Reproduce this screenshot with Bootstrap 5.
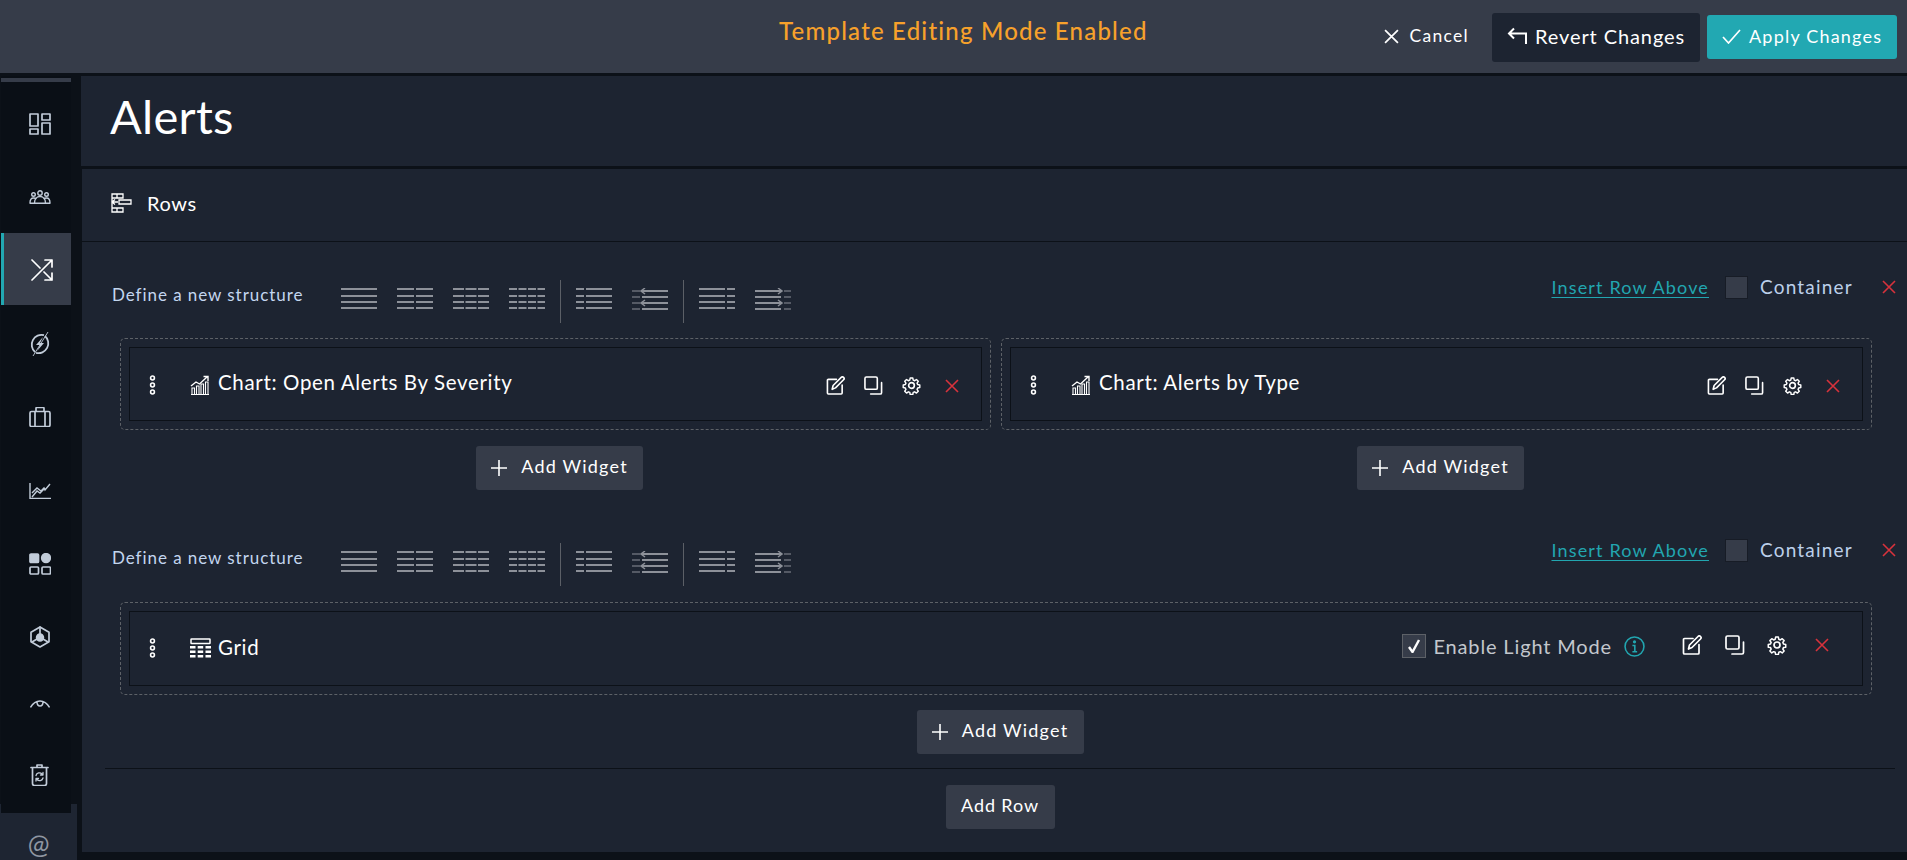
<!DOCTYPE html>
<html lang="en"><head><meta charset="utf-8"><title>Alerts</title>
<link rel="stylesheet" href="https://cdn.jsdelivr.net/npm/bootstrap@5.3.0/dist/css/bootstrap.min.css">
<style>
html,body{height:860px;overflow:hidden}
body{background:#0c1118;font-family:Lato,"Liberation Sans",sans-serif;color:#fff;letter-spacing:.6px}
svg{display:block;flex:none}
.ico{fill:none;stroke:currentColor;stroke-width:1.7;stroke-linecap:round;stroke-linejoin:round}
.topbar{height:76px;background:#363c49;border-bottom:3px solid #0c1118;flex:none}
.top-title{padding-left:779px;margin-top:17px;font-size:24px;line-height:28px;color:#f7a12b;letter-spacing:1.2px;font-weight:500}
.top-actions{margin-left:auto;padding-right:10px;padding-top:13px;gap:7px}
.btn-cancel{padding:0;margin-right:16px;margin-top:11px;color:#fff;font-size:17.5px;line-height:24px;gap:10px;border:0;letter-spacing:1.3px}
.btn-revert{height:49px;width:208px;background:#1d2431;border:0;color:#fff;font-size:20px;gap:8px;border-radius:3px;padding:0 0 4px 15px;letter-spacing:.9px}
.btn-apply{height:44px;width:190px;background:#22a8b2;border:0;color:#fff;font-size:18px;margin-top:2px;gap:8px;border-radius:3px;padding:0 0 2px 15px;letter-spacing:1.2px}
.shell{height:784px}
.rail{width:81px;flex:none;background:#0c1118}
.rail-list{position:relative;z-index:1;margin-left:1px;width:70px;background:#0a0f16;padding-top:2px;padding-bottom:2px}
.rail-strip{height:4px;background:#363c49;margin-bottom:4.2px}
.rail-item{height:72px;margin-bottom:1.4px;padding-top:3px;color:#c2ccd9;padding-left:7px}
.rail-item.is-short{height:62.6px}
.rail-item.is-on{background:#363c49;border-left:3px solid #22a8b2;color:#fff;padding-left:9px}
.rail-foot{width:77px;height:56px;margin-top:-9px;background:#1e2532;color:#8f96a1;font-size:26px;line-height:30px;padding-top:25px;letter-spacing:0}
.main{min-width:0;flex:1}
.title-panel{height:90px;background:#1d2431;margin-bottom:3px;padding-left:29px;padding-bottom:10px}
.page-h{font-size:47px;line-height:1;margin:0;font-weight:400;letter-spacing:.3px}
.rows-panel{height:683px;margin-left:1px;background:#1d2431}
.rows-head{height:73px;border-bottom:1px solid #0c1118;padding-left:29px;padding-bottom:4px;gap:15px;font-size:20px}
.struct{padding:38px 11px 0 38px}
.struct.is-second{padding-top:53px}
.tools{height:43px;margin-bottom:15px}
.is-second .tools{margin-bottom:16px}
.def-label{width:229px;margin-left:-8px;margin-top:3px;line-height:24px;font-size:17px;color:#c3d6ef;letter-spacing:.94px}
.gly{color:#8d9199;margin-top:8px}
.tool-gap{gap:20px}
.tool-sep{width:1px;height:43px;background:#5b5f66;margin:0 15px}
.tools-r{margin-left:auto;margin-top:-5px;height:24px;font-size:19px}
.ins-link{color:#22a6b0;margin-right:16px;font-size:18px;letter-spacing:1.15px;text-underline-offset:3px}
.box-mock{width:23px;height:23px;background:#363c49;border:1px solid #171c26;margin-right:12px}
.cont-label{color:#bcd0ea;width:122px;letter-spacing:1.2px}
.x-red{color:#d8323c}
.dash-row{gap:10px;margin-right:24px}
.dash-box{flex:1 1 0;min-width:0;height:92px;border:1px dashed #5d6167;border-radius:5px;padding:8px}
.is-second .dash-box{height:93px}
.wid{height:74px;border:1px solid #0c1118;background:#1d2431;padding-left:19px;color:#fff;font-size:20.5px}
.is-second .wid{height:75px}
.wid>svg{margin-top:2px}
.is-second .wid>svg{margin-top:-1px}
.wid-lead{margin-left:34px}
.wid-name{margin-left:8px;margin-top:-3px;letter-spacing:.65px}
.is-second .wid-name{margin-left:7px}
.wid-acts{margin-left:auto;gap:19px;margin-top:3px;margin-right:22px}
.wid-acts .x-red{margin-left:5px}
.acts-big{gap:22px;margin-right:33px;margin-top:-7px;margin-left:0}
.acts-big .x-red{margin-left:6px}
.acts-big svg:first-child{margin-right:1px}
.light-wrap{margin-left:auto;margin-right:37px;margin-top:-5px;color:#c3c7cd;font-size:20px;letter-spacing:.85px}
.chk-mock{width:24px;height:24px;background:#363c49;border:1px solid #5d6167;margin-right:7px;color:#fff}
.info-ico{color:#22a6b0;margin-left:12px}
.add-col{flex:1 1 0;text-align:center;padding-left:8px}
.btn-add{height:44px;background:#363c49;border:0;color:#fff;font-size:18px;border-radius:3px;padding:0 0 3px;gap:14px;letter-spacing:1.2px}
.btn-add svg{margin-top:3px}
.w-add{width:167px;margin-top:16px}
.w-add-one{margin-top:15px}
.w-row{width:109px;letter-spacing:.9px}
.foot-rule{margin:14px 12px 0 23px;border-top:1px solid #0c1118;padding-top:16px;text-align:center}
</style></head>
<body class="d-flex flex-column">
<svg width="0" height="0" class="position-absolute">
<defs>
<symbol id="g1" viewBox="0 0 36 21"><path d="M0 1h36M0 8h36M0 14h36M0 20h36" stroke="currentColor" stroke-width="2"/></symbol>
<symbol id="g2" viewBox="0 0 36 21"><path d="M0 1h17M19 1h17M0 8h17M19 8h17M0 14h17M19 14h17M0 20h17M19 20h17" stroke="currentColor" stroke-width="2"/></symbol>
<symbol id="g3" viewBox="0 0 36 21"><path d="M0 1h11M12.500 1h11M25 1h11M0 8h11M12.500 8h11M25 8h11M0 14h11M12.500 14h11M25 14h11M0 20h11M12.500 20h11M25 20h11" stroke="currentColor" stroke-width="2"/></symbol>
<symbol id="g4" viewBox="0 0 36 21"><path d="M0 1h8M9.500 1h8M19 1h8M28.500 1h7.500M0 8h8M9.500 8h8M19 8h8M28.500 8h7.500M0 14h8M9.500 14h8M19 14h8M28.500 14h7.500M0 20h8M9.500 20h8M19 20h8M28.500 20h7.500" stroke="currentColor" stroke-width="2"/></symbol>
<symbol id="g5" viewBox="0 0 36 21"><path d="M0 1h8M10 1h26M0 8h8M10 8h26M0 14h8M10 14h26M0 20h8M10 20h26" stroke="currentColor" stroke-width="2"/></symbol>
<symbol id="g6" viewBox="0 0 36 22"><path d="M0 3h8M0 9h8M0 15h8M0 21h8" stroke="currentColor" stroke-width="2" opacity=".5"/><path d="M10 3h26M10 9h26M10 15h26M10 21h26" stroke="currentColor" stroke-width="2"/><path d="M13 0l-4 3 4 3M13 12l-4 3 4 3" fill="none" stroke="currentColor" stroke-width="1.500"/></symbol>
<symbol id="g7" viewBox="0 0 36 21"><path d="M0 1h26M28 1h8M0 8h26M28 8h8M0 14h26M28 14h8M0 20h26M28 20h8" stroke="currentColor" stroke-width="2"/></symbol>
<symbol id="g8" viewBox="0 0 36 22"><path d="M29 3h7M29 9h7M29 15h7M29 21h7" stroke="currentColor" stroke-width="2" opacity=".5"/><path d="M0 3h26M0 9h26M0 15h26M0 21h26" stroke="currentColor" stroke-width="2"/><path d="M23 0l4 3-4 3M23 12l4 3-4 3" fill="none" stroke="currentColor" stroke-width="1.500"/></symbol>
<symbol id="i-edit" viewBox="0 0 20 20"><path class="ico" d="M11 3.500H2.500a1 1 0 0 0-1 1V18a1 1 0 0 0 1 1H16a1 1 0 0 0 1-1V9.500"/><path class="ico" d="M6.500 14l1-4L16 1.500a1.400 1.400 0 0 1 2.500 2.500L10 12.500z"/></symbol>
<symbol id="i-copy" viewBox="0 0 20 20"><rect class="ico" x="1" y="1" width="13" height="13" rx="1.500"/><path class="ico" d="M18.500 7v10.500a1.500 1.500 0 0 1-1.500 1.500H7"/></symbol>
<symbol id="i-gear" viewBox="0 0 20 20"><circle class="ico" cx="10" cy="10" r="3"/><path class="ico" d="M8.500 1.200h3l.5 2.500 1.700.7 2.100-1.400 2.100 2.100-1.400 2.100.7 1.700 2.500.5v3l-2.500.5-.7 1.700 1.400 2.100-2.100 2.100-2.100-1.400-1.700.7-.5 2.500h-3l-.5-2.500-1.700-.7-2.100 1.400-2.100-2.100 1.400-2.100-.7-1.700-2.500-.5v-3l2.500-.5.7-1.700-1.400-2.100 2.100-2.100 2.100 1.400 1.700-.7z" transform="translate(1 1) scale(.9)"/></symbol>
<symbol id="i-x" viewBox="0 0 14 14"><path d="M1 1l12 12M13 1L1 13" stroke="currentColor" stroke-width="1.600" fill="none"/></symbol>
<symbol id="i-dots" viewBox="0 0 8 22"><g fill="none" stroke="currentColor" stroke-width="1.800"><circle cx="4" cy="3" r="2.200"/><circle cx="4" cy="11" r="2.200"/><circle cx="4" cy="19" r="2.200"/></g></symbol>
<symbol id="i-chart" viewBox="0 0 20 20"><path fill="none" stroke="currentColor" stroke-width="1.100" d="M1 19.500h18M2 19v-6h2.500v6M6.500 19v-8H9v8M11 19v-10h2.500v10M15.500 19V7H18v12"/><path fill="none" stroke="currentColor" stroke-width="1.400" d="M1 11l5-4 3.500 2L17 2M13.500 1.500H18V6"/></symbol>
<symbol id="i-grid" viewBox="0 0 21 20"><rect x="1" y="1" width="19" height="4.500" rx=".5" fill="none" stroke="currentColor" stroke-width="1.500"/><g fill="currentColor"><rect x="0" y="8" width="5.500" height="2.500"/><rect x="7.700" y="8" width="5.500" height="2.500"/><rect x="15.500" y="8" width="5.500" height="2.500"/><rect x="0" y="12.500" width="5.500" height="2.500"/><rect x="7.700" y="12.500" width="5.500" height="2.500"/><rect x="15.500" y="12.500" width="5.500" height="2.500"/><rect x="0" y="17" width="5.500" height="2.500"/><rect x="7.700" y="17" width="5.500" height="2.500"/><rect x="15.500" y="17" width="5.500" height="2.500"/></g></symbol>
<symbol id="i-plus" viewBox="0 0 16 16"><path d="M8 0v16M0 8h16" stroke="currentColor" stroke-width="1.600"/></symbol>
</defs></svg>

<header class="topbar d-flex">
  <div class="top-title">Template Editing Mode Enabled</div>
  <div class="top-actions d-flex align-items-start">
    <button class="btn-cancel d-flex align-items-center bg-transparent" type="button"><svg width="15" height="15"><use href="#i-x"/></svg>Cancel</button>
    <button class="btn-revert d-flex align-items-center" type="button"><svg width="20" height="17" viewBox="0 0 20 17" fill="none" stroke="currentColor" stroke-width="2"><path d="M19 17V6.500H2M7 1.500L2 6.500l5 5"/></svg>Revert Changes</button>
    <button class="btn-apply d-flex align-items-center" type="button"><svg width="19" height="15" viewBox="0 0 19 15" fill="none" stroke="currentColor" stroke-width="1.700"><path d="M1 8l5.500 6L18 1"/></svg>Apply Changes</button>
  </div>
</header>

<div class="shell d-flex">
  <nav class="rail">
    <div class="rail-list">
      <div class="rail-strip"></div>
      <div class="rail-item d-flex align-items-center justify-content-center"><svg width="22" height="22" viewBox="0 0 22 22" class="ico"><rect x="1" y="1" width="8" height="12"/><rect x="13" y="1" width="8" height="6"/><rect x="1" y="16" width="8" height="5"/><rect x="13" y="10" width="8" height="11"/></svg></div>
      <div class="rail-item d-flex align-items-center justify-content-center"><svg width="22" height="14" viewBox="0 0 22 14" fill="none" stroke="currentColor" stroke-width="1.400"><circle cx="11" cy="3" r="2.200"/><circle cx="4.500" cy="4.500" r="1.800"/><circle cx="17.500" cy="4.500" r="1.800"/><path d="M1 13c0-3 1.500-5 3.500-5s3 1 3 1M21 13c0-3-1.500-5-3.500-5s-3 1-3 1M5.500 13c0-4 2.500-6.500 5.500-6.500s5.500 2.500 5.500 6.500M.5 13.300h21"/></svg></div>
      <div class="rail-item is-on d-flex align-items-center justify-content-center"><svg width="22" height="22" viewBox="0 0 22 22" class="ico"><path d="M1 1l8 8M13 13l8 8M1 21L21 1M14 1h7v7M21 14v7h-7"/></svg></div>
      <div class="rail-item d-flex align-items-center justify-content-center"><svg width="22" height="24" viewBox="0 0 22 24" fill="none" stroke="currentColor" stroke-width="1.800"><path d="M6 20A9.800 9.800 0 0 1 15 3.200M16 4A9.800 9.800 0 0 1 7 20.800"/><path d="M14 5L7 13h4l-3 6 7-8h-4z" fill="currentColor" stroke="none"/><path d="M19 0L4 24" stroke-width=".9"/></svg></div>
      <div class="rail-item d-flex align-items-center justify-content-center"><svg width="22" height="20" viewBox="0 0 22 20" class="ico"><rect x="1" y="4.500" width="20" height="15" rx="1.500"/><path d="M7 4V1.500a1 1 0 0 1 1-1h6a1 1 0 0 1 1 1V4M6 5v14M16 5v14"/></svg></div>
      <div class="rail-item d-flex align-items-center justify-content-center"><svg width="22" height="16" viewBox="0 0 22 16" fill="none" stroke="currentColor" stroke-width="1.400"><path d="M1 0v15.500h21M3 14l5-6 3 2 5-5M3 10l5-5 4 3 3-3 1 2 5-6"/></svg></div>
      <div class="rail-item d-flex align-items-center justify-content-center"><svg width="22" height="22" viewBox="0 0 22 22" class="ico"><rect x="1" y="1" width="8.500" height="8.500" rx="1" fill="currentColor"/><circle cx="17" cy="5" r="4.300" fill="currentColor"/><rect x="1" y="14" width="8.500" height="7" rx="1"/><rect x="13" y="14" width="8.500" height="7" rx="1"/></svg></div>
      <div class="rail-item d-flex align-items-center justify-content-center"><svg width="20" height="22" viewBox="0 0 20 22" class="ico"><path d="M10 1l9 5.200v9.600L10 21 1 15.800V6.200z"/><path d="M10 1v8M2 16l5-3M18 16l-5-3"/><circle cx="10" cy="11.500" r="3.400" fill="currentColor"/></svg></div>
      <div class="rail-item is-short d-flex align-items-start justify-content-center"><svg class="mt-4" width="20" height="8" viewBox="0 0 20 8" fill="none" stroke="currentColor" stroke-width="1.500"><path d="M.5 7.500C3 3 6 1 10 1s7 2 9.500 6.500M7 1.500c0 3 1 4.500 3 4.500s3-1.500 3-4.500"/></svg></div>
      <div class="rail-item d-flex align-items-center justify-content-center"><svg width="19" height="22" viewBox="0 0 19 22" class="ico"><path d="M1 3.500h17M7 3V1h5v2M2.500 4v15.500a2 2 0 0 0 2 2h10a2 2 0 0 0 2-2V4"/><path d="M6 11.500a3.500 3.500 0 0 1 6-1.500l1 1M13 14a3.500 3.500 0 0 1-6 1.500l-1-1M13 8.500V11h-2.500M6 17v-2.500h2.500" stroke-width="1.300"/></svg></div>
    </div>
    <div class="rail-foot d-flex justify-content-center">@</div>
  </nav>

  <main class="main">
    <div class="title-panel d-flex align-items-center"><h1 class="page-h">Alerts</h1></div>
    <section class="rows-panel">
      <div class="rows-head d-flex align-items-center">
        <svg width="21" height="20" viewBox="0 0 21 20" fill="none" stroke="currentColor" stroke-width="1.300"><path d="M1 1h11v4H1zM6 1v4M1 15h11v4H1zM6 15v4M20 7H8v4h12zM7 9H1M4 6.500L1 9l3 2.500M1 5v10"/></svg>
        <span>Rows</span>
      </div>

      <div class="struct">
        <div class="tools d-flex align-items-start">
          <div class="def-label">Define a new structure</div>
          <div class="gly d-flex tool-gap"><svg width="36" height="21"><use href="#g1"/></svg><svg width="36" height="21"><use href="#g2"/></svg><svg width="36" height="21"><use href="#g3"/></svg><svg width="36" height="21"><use href="#g4"/></svg></div>
          <div class="tool-sep"></div>
          <div class="gly d-flex tool-gap"><svg width="36" height="21"><use href="#g5"/></svg><svg width="36" height="22"><use href="#g6"/></svg></div>
          <div class="tool-sep"></div>
          <div class="gly d-flex tool-gap"><svg width="36" height="21"><use href="#g7"/></svg><svg width="36" height="22"><use href="#g8"/></svg></div>
          <div class="tools-r d-flex align-items-center">
            <a class="ins-link" href="#">Insert Row Above</a><span class="box-mock"></span><span class="cont-label">Container</span><svg class="x-red" width="14" height="14"><use href="#i-x"/></svg>
          </div>
        </div>
        <div class="dash-row d-flex">
          <div class="dash-box"><div class="wid d-flex align-items-center">
            <svg width="7" height="22"><use href="#i-dots"/></svg>
            <svg class="wid-lead" width="20" height="20"><use href="#i-chart"/></svg>
            <span class="wid-name">Chart: Open Alerts By Severity</span>
            <div class="wid-acts d-flex align-items-center"><svg width="19" height="19"><use href="#i-edit"/></svg><svg width="19" height="19"><use href="#i-copy"/></svg><svg width="19" height="19"><use href="#i-gear"/></svg><svg class="x-red" width="14" height="14"><use href="#i-x"/></svg></div>
          </div></div>
          <div class="dash-box"><div class="wid d-flex align-items-center">
            <svg width="7" height="22"><use href="#i-dots"/></svg>
            <svg class="wid-lead" width="20" height="20"><use href="#i-chart"/></svg>
            <span class="wid-name">Chart: Alerts by Type</span>
            <div class="wid-acts d-flex align-items-center"><svg width="19" height="19"><use href="#i-edit"/></svg><svg width="19" height="19"><use href="#i-copy"/></svg><svg width="19" height="19"><use href="#i-gear"/></svg><svg class="x-red" width="14" height="14"><use href="#i-x"/></svg></div>
          </div></div>
        </div>
        <div class="d-flex dash-row">
          <div class="add-col"><button class="btn-add w-add d-inline-flex align-items-center justify-content-center" type="button"><svg width="16" height="16"><use href="#i-plus"/></svg>Add Widget</button></div>
          <div class="add-col"><button class="btn-add w-add d-inline-flex align-items-center justify-content-center" type="button"><svg width="16" height="16"><use href="#i-plus"/></svg>Add Widget</button></div>
        </div>
      </div>

      <div class="struct is-second">
        <div class="tools d-flex align-items-start">
          <div class="def-label">Define a new structure</div>
          <div class="gly d-flex tool-gap"><svg width="36" height="21"><use href="#g1"/></svg><svg width="36" height="21"><use href="#g2"/></svg><svg width="36" height="21"><use href="#g3"/></svg><svg width="36" height="21"><use href="#g4"/></svg></div>
          <div class="tool-sep"></div>
          <div class="gly d-flex tool-gap"><svg width="36" height="21"><use href="#g5"/></svg><svg width="36" height="22"><use href="#g6"/></svg></div>
          <div class="tool-sep"></div>
          <div class="gly d-flex tool-gap"><svg width="36" height="21"><use href="#g7"/></svg><svg width="36" height="22"><use href="#g8"/></svg></div>
          <div class="tools-r d-flex align-items-center">
            <a class="ins-link" href="#">Insert Row Above</a><span class="box-mock"></span><span class="cont-label">Container</span><svg class="x-red" width="14" height="14"><use href="#i-x"/></svg>
          </div>
        </div>
        <div class="dash-row d-flex">
          <div class="dash-box"><div class="wid d-flex align-items-center">
            <svg width="7" height="22"><use href="#i-dots"/></svg>
            <svg class="wid-lead" width="21" height="20"><use href="#i-grid"/></svg>
            <span class="wid-name">Grid</span>
            <div class="light-wrap d-flex align-items-center"><span class="chk-mock d-flex align-items-center justify-content-center"><svg width="14" height="14" viewBox="0 0 14 14"><path d="M2 8l3.500 5L12 1" fill="none" stroke="currentColor" stroke-width="2.400"/></svg></span>Enable Light Mode<svg class="info-ico" width="21" height="21" viewBox="0 0 20 20" fill="none" stroke="currentColor" stroke-width="1.500"><circle cx="10" cy="10" r="9"/><path d="M8 9h2.300v6M8 15h4.500"/><circle cx="10" cy="5.500" r=".8" fill="currentColor"/></svg></div>
            <div class="wid-acts acts-big d-flex align-items-center"><svg width="20" height="20"><use href="#i-edit"/></svg><svg width="20" height="20"><use href="#i-copy"/></svg><svg width="20" height="20"><use href="#i-gear"/></svg><svg class="x-red" width="14" height="14"><use href="#i-x"/></svg></div>
          </div></div>
        </div>
        <div class="add-col dash-row"><button class="btn-add w-add w-add-one d-inline-flex align-items-center justify-content-center" type="button"><svg width="16" height="16"><use href="#i-plus"/></svg>Add Widget</button></div>
      </div>

      <div class="foot-rule"><button class="btn-add w-row d-inline-flex align-items-center justify-content-center" type="button">Add Row</button></div>
    </section>
  </main>
</div>
</body></html>
